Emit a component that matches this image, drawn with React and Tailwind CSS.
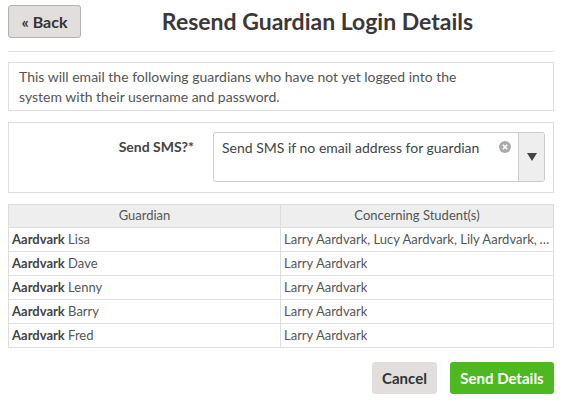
import React from 'react';

const guardians = [
    { last: 'Aardvark', first: 'Lisa', students: 'Larry Aardvark, Lucy Aardvark, Lily Aardvark, Alfie Aardvark' },
    { last: 'Aardvark', first: 'Dave', students: 'Larry Aardvark' },
    { last: 'Aardvark', first: 'Lenny', students: 'Larry Aardvark' },
    { last: 'Aardvark', first: 'Barry', students: 'Larry Aardvark' },
    { last: 'Aardvark', first: 'Fred', students: 'Larry Aardvark' },
];

const App = () => {
    return (
        <div className="w-[564px] h-[403px] bg-white pl-2 pr-[10px] pt-[5px] text-[14px] text-[#555] font-['Lato',sans-serif]">
            {/* Header */}
            <div className="flex items-center h-[33px]">
                <button className="w-[73px] h-[33px] rounded-[3px] border border-[#b5b0b0] bg-[#e2dede] text-[16px] font-bold text-[#333]">
                    « Back
                </button>
                <h1 className="flex-1 text-center text-[23px] font-bold text-[#3b3838]">
                    Resend Guardian Login Details
                </h1>
            </div>
            <div className="border-t border-[#ddd] mt-[13px]"></div>

            {/* Info */}
            <div className="mt-[10px] h-[49px] border border-[#ddd] px-[10px] py-[4px] leading-[20px]">
                This will email the following guardians who have not yet logged into the
                <br />
                system with their username and password.
            </div>

            {/* Form */}
            <div className="mt-[11px] border border-[#ddd] h-[71px] flex pt-[9px]">
                <div className="w-[204px] text-right pr-[19px] pt-[4px] font-bold text-[#444]">
                    Send SMS?*
                </div>
                <div className="flex w-[332px] h-[50px] border border-[#ccc] rounded-[3px] overflow-hidden">
                    <div className="flex-1 flex items-start justify-between pl-[8px] pr-[7px] pt-[4px]">
                        <span className="text-[#444]">Send SMS if no email address for guardian</span>
                        <svg width="12" height="12" viewBox="0 0 12 12" className="mt-[4px]">
                            <circle cx="6" cy="6" r="6" fill="#aaa" />
                            <path d="M3.8 3.8 L8.2 8.2 M8.2 3.8 L3.8 8.2" stroke="#fff" strokeWidth="1.6" />
                        </svg>
                    </div>
                    <div className="w-[26px] bg-[#eee] border-l border-[#ccc] flex items-center justify-center">
                        <svg width="10" height="8" viewBox="0 0 10 8">
                            <path d="M0 0 L10 0 L5 8 Z" fill="#444" />
                        </svg>
                    </div>
                </div>
            </div>

            {/* Table */}
            <table className="mt-[11px] w-full border-collapse table-fixed text-[13px]">
                <thead>
                    <tr className="bg-[#eee] h-[23px]">
                        <th className="border border-[#ddd] font-normal text-center w-[272px]">Guardian</th>
                        <th className="border border-[#ddd] font-normal text-center">Concerning Student(s)</th>
                    </tr>
                </thead>
                <tbody>
                    {guardians.map((g, i) => (
                        <tr key={i} className="h-[24px]">
                            <td className="border border-[#ddd] px-[3px] whitespace-nowrap overflow-hidden text-ellipsis">
                                <span className="font-bold text-[#444]">{g.last}</span> {g.first}
                            </td>
                            <td className="border border-[#ddd] pl-[3px] pr-[2px] whitespace-nowrap overflow-hidden text-ellipsis">
                                {g.students}
                            </td>
                        </tr>
                    ))}
                </tbody>
            </table>

            {/* Actions */}
            <div className="flex justify-end gap-[13px] mt-[14px]">
                <button className="w-[65px] h-[32px] rounded-[3px] bg-[#e2dede] text-[15px] font-bold text-[#333]">
                    Cancel
                </button>
                <button className="w-[104px] h-[32px] rounded-[3px] bg-[#4db81f] text-[15px] font-bold text-white">
                    Send Details
                </button>
            </div>
        </div>
    );
};

export default App;
